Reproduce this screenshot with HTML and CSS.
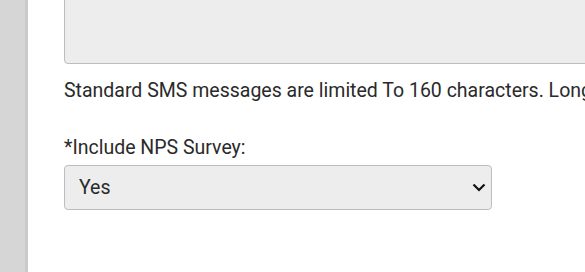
FILE: index.html
```html
<!DOCTYPE html>
<html lang="en">
<head>
  <meta charset="UTF-8" />
  <meta name="viewport" content="width=device-width, initial-scale=1.0"/>
  <title>SMS Settings</title>
  <link rel="stylesheet" href="styles.css">
</head>
<body>

<div class="layout">
  <div class="sidebar"></div>
  <div class="main">
    <textarea class="message-box"></textarea>
    <p class="help-text">Standard SMS messages are limited To 160 characters. Longer messages may be split into multiple parts.</p>

    <label class="field-label" for="npsSurvey">*Include NPS Survey:</label>
    <div class="select-wrap">
      <select class="field-select" id="npsSurvey">
        <option>Yes</option>
        <option>No</option>
      </select>
      <svg class="select-arrow" width="14" height="9" viewBox="0 0 14 9">
        <path d="M1.5 1.5 L7 7 L12.5 1.5" fill="none" stroke="#111" stroke-width="2.2"/>
      </svg>
    </div>
  </div>
</div>

</body>
</html>
```

FILE: styles.css
```css
html, body {
  margin: 0;
  height: 100%;
  overflow: hidden;
}
body {
  font-family: Roboto, 'Liberation Sans', sans-serif;
  color: #2a2a2a;
  background: #fff;
}
.layout {
  display: flex;
  height: 100%;
}
.sidebar {
  width: 25px;
  flex-shrink: 0;
  background: #d6d6d6;
  border-right: 3px solid #c9c9c9;
}
.main {
  padding-left: 36px;
  min-width: 0;
  flex: 1;
  overflow: hidden;
}
.message-box {
  display: block;
  box-sizing: border-box;
  width: 600px;
  height: 104px;
  margin-top: -40px;
  background: #ededed;
  border: 1px solid #bdbdbd;
  border-radius: 4px;
  resize: none;
}
.help-text {
  margin: 15px 0 0;
  font-size: 19.5px;
  line-height: 24px;
  white-space: nowrap;
}
.field-label {
  display: block;
  margin-top: 33px;
  font-size: 19.5px;
  line-height: 24px;
}
.select-wrap {
  position: relative;
  width: 428px;
  margin-top: 5px;
}
.field-select {
  display: block;
  box-sizing: border-box;
  width: 100%;
  height: 45px;
  padding: 0 30px 0 14px;
  font-family: inherit;
  font-size: 19.5px;
  color: #2a2a2a;
  background: #ededed;
  border: 1px solid #bdbdbd;
  border-radius: 4px;
  appearance: none;
  -webkit-appearance: none;
}
.select-arrow {
  position: absolute;
  right: 6px;
  top: 18px;
  pointer-events: none;
}
```
